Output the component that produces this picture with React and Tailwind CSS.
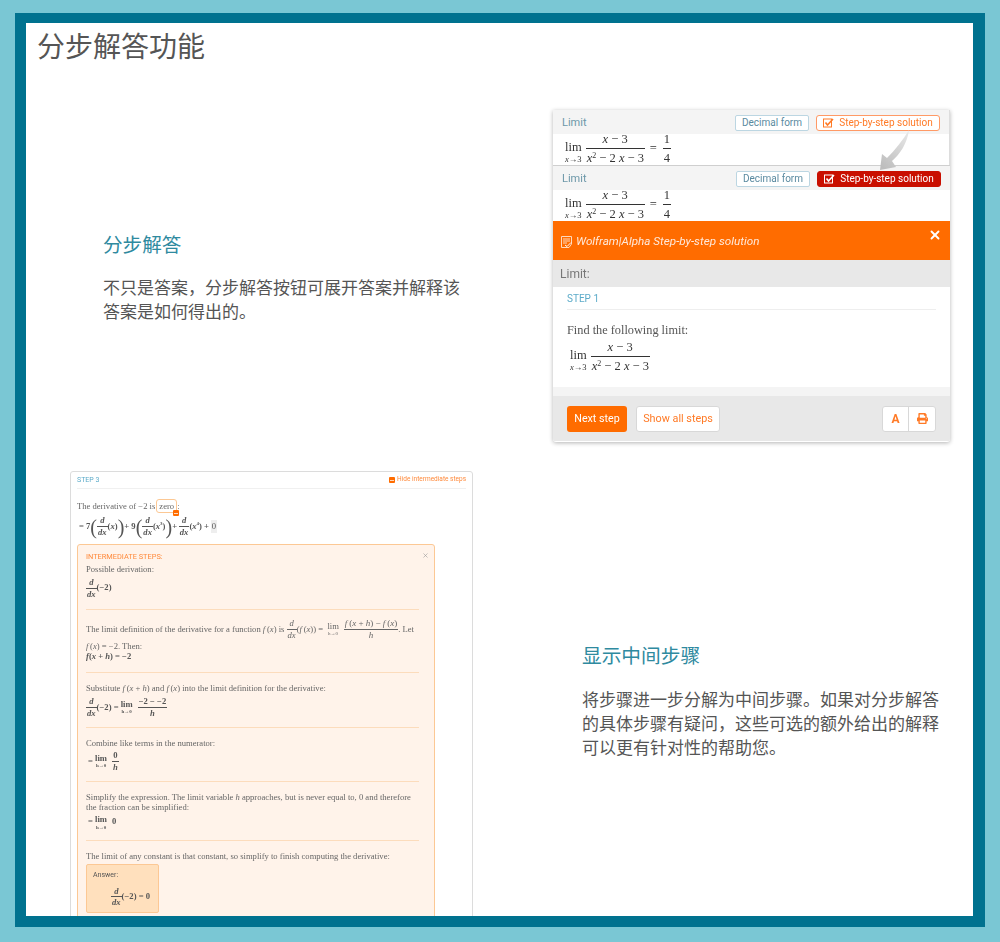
import React from "react";
import { X } from "lucide-react";
import { FaPrint } from "react-icons/fa";

const serif = "font-['Liberation_Serif',serif]";
const roboto = "font-['Roboto',sans-serif]";

const Frac = ({ top, bottom, size = "", pad = "pb-[1px]", padBottom = "pt-[1px]" }) => (
  <span className={`inline-flex flex-col items-center align-middle leading-none whitespace-nowrap ${size}`}>
    <span className={`px-[1px] ${pad}`}>{top}</span>
    <span className={`w-full border-t border-current text-center px-[1px] ${padBottom}`}>{bottom}</span>
  </span>
);

const Lim = ({ sub, subSize = "text-[8.5px]", gap = "mr-[5px]" }) => (
  <span className={`inline-flex flex-col items-center align-middle leading-none whitespace-nowrap ${gap}`}>
    <span>lim</span>
    <span className={`${subSize} mt-[1px]`}>{sub}</span>
  </span>
);

const V = ({ children }) => <i>{children}</i>;

const Denom = () => (
  <span>
    <V>x</V>
    <sup className="text-[8px] leading-none">2</sup> − 2 <V>x</V> − 3
  </span>
);

const LimitMath = ({ answer = true }) => (
  <div className={`${serif} text-[12.5px] text-[#333] flex items-center`}>
    <Lim gap="mr-[4px] mt-[7px]" sub={<span><V>x</V>→3</span>} />
    <Frac pad="pb-[2px]" padBottom="pt-[3px]" top={<span><V>x</V> − 3</span>} bottom={<Denom />} size="w-[59px]" />
    {answer && <span className="ml-[5px] mr-[6px]">=</span>}
    {answer && <Frac pad="pb-[2px]" padBottom="pt-[3px]" top="1" bottom="4" />}
  </div>
);

const ResultPanel = ({ active }) => (
  <div className={active ? "" : "border-r border-[#dddddd]"}>
    <div className="h-[24px] bg-[#f4f4f4] flex items-center pt-[2px] pl-[9px] pr-[9px]">
      <span className={`${roboto} text-[11px] text-[#6b97a8]`}>Limit</span>
      <button className={`${roboto} ml-auto w-[74px] h-[16px] bg-white border border-[#bcd6e2] rounded-[2px] text-[10px] text-[#5a8aa0] leading-none`}>
        Decimal form
      </button>
      <button
        className={`${roboto} ml-[7px] w-[124px] h-[16px] rounded-[3px] text-[10px] leading-none flex items-center justify-center gap-[5px] border ${
          active ? "bg-[#c90f00] border-[#c90f00] text-white" : "bg-white border-[#ff9a66] text-[#ff7a26]"
        }`}
      >
        <svg width="11" height="10" viewBox="0 0 11 10" fill="none" stroke="currentColor">
          <rect x="0.5" y="1" width="8" height="8" />
          <path d="M2.5 4.5 L4.5 7 L10 1" strokeWidth="1.6" />
        </svg>
        Step-by-step solution
      </button>
    </div>
    <div className="h-[31px] bg-white pl-[12px] pb-[2px] flex items-center">
      <LimitMath />
    </div>
  </div>
);

const WolframCard = () => (
  <div className="relative w-[397px] h-[332px] rounded-b-[3px] overflow-hidden shadow-[0_1px_4px_rgba(0,0,0,0.3)] blur-[0.4px]">
    <ResultPanel />
    <div className="h-[1px] bg-[#cfcfcf]" />
    <ResultPanel active />
    <svg className="absolute left-[320px] top-[18px]" width="45" height="50" viewBox="0 0 45 50">
      <defs>
        <linearGradient id="arrowFade" x1="0.8" y1="0" x2="0.2" y2="1">
          <stop offset="0" stopColor="#e6e6e6" />
          <stop offset="1" stopColor="#bdbdbd" />
        </linearGradient>
      </defs>
      <path fill="url(#arrowFade)" d="M36 2 C34 16 27 26 19 33 L23 39 L7 42 L9 26 L14 30 C22 22 30 12 36 2 Z" />
    </svg>
    <div className="h-[39px] bg-[#ff6c00] flex items-center pt-[3px] pl-[8px] pr-[9px] text-white relative">
      <svg width="11" height="12" viewBox="0 0 11 12" fill="none" stroke="#ffd9bd">
        <path d="M0.5 0.5 H10.5 V8 L8 11.5 H0.5 Z M2 3 H9 M2 5 H9 M2 7 H6" />
        <path d="M4 9 L6 10.5 L10 6.5" stroke="#fff" />
      </svg>
      <span className={`${roboto} ml-[4px] text-[11.7px] italic text-[#ffe9da]`}>Wolfram|Alpha Step-by-step solution</span>
      <X className="absolute right-[8px] top-[7px]" size={14} strokeWidth={3.2} />
    </div>
    <div className={`${roboto} h-[27px] bg-[#e8e8e8] flex items-center pl-[7px] text-[12px] text-[#777]`}>Limit:</div>
    <div className="h-[100px] bg-white px-[14px] pt-[6px]">
      <div className={`${roboto} text-[10px] text-[#5cabc9] h-[15px] border-b border-[#eeeeee] box-content pb-[1px] leading-[12px]`}>
        STEP 1
      </div>
      <div className={`${serif} text-[12.3px] text-[#555] mt-[13px] leading-[15px]`}>Find the following limit:</div>
      <div className="ml-[3px] mt-[3px]">
        <LimitMath answer={false} />
      </div>
    </div>
    <div className="h-[9px] bg-[#f4f4f4]" />
    <div className="h-[45px] bg-[#e8e8e8] flex items-center pl-[14px] pr-[14px]">
      <button className={`${roboto} w-[60px] h-[26px] pt-[2px] rounded-[3px] bg-[#ff6c00] text-white text-[10.7px]`}>Next step</button>
      <button className={`${roboto} ml-[9px] w-[84px] h-[26px] pt-[2px] rounded-[3px] bg-white border border-[#d8d8d8] text-[#ff7a26] text-[10.8px]`}>
        Show all steps
      </button>
      <div className="ml-auto flex h-[26px] rounded-[3px] bg-white border border-[#d8d8d8]">
        <span className={`${roboto} w-[26px] flex items-center justify-center text-[#ff7a26] text-[12px] font-bold border-r border-[#d8d8d8]`}>A</span>
        <span className="w-[26px] flex items-center justify-center text-[#ff7a26]">
          <FaPrint size={11} />
        </span>
      </div>
    </div>
  </div>
);

const Section = ({ h, children }) => (
  <div className={`${h} border-b border-[#fcdcbc] w-[333px] pt-[6px]`}>{children}</div>
);

const Bold = ({ children, className = "" }) => (
  <span className={`font-bold text-[#555] ${className}`}>{children}</span>
);

const D = ({ arg }) => (
  <Bold>
    <Frac top={<i>d</i>} bottom={<i>dx</i>} />
    {arg}
  </Bold>
);

const Minus = ({ className = "" }) => (
  <span className={`w-[6px] h-[6px] shrink-0 bg-[#ff6c00] rounded-[1px] flex items-center justify-center ${className}`}>
    <span className="w-[4px] h-[1px] bg-[#ffd9bd]" />
  </span>
);

const Paren = ({ children }) => <span className="text-[20px] font-light leading-none">{children}</span>;

const StepCard = () => (
  <div className={`w-[403px] h-[470px] border border-[#dcdcdc] rounded-[3px] bg-white px-[6px] ${serif} text-[8.6px] text-[#666] blur-[0.5px]`}>
    <div className="h-[17px] border-b border-[#f0f0f0] flex items-center justify-between mb-[9px]">
      <span className={`${roboto} text-[7px] text-[#5cabc9]`}>STEP 3</span>
      <span className={`${roboto} text-[6.5px] text-[#ff8a3c] flex items-center gap-[2px]`}>
        <Minus />
        Hide intermediate steps
      </span>
    </div>
    <div className="h-[16px] flex items-center">
      The derivative of −2 is
      <span className="relative ml-[1px] px-[2px] border border-[#fcc894] rounded-[3px]">
        zero
        <Minus className="absolute -right-[3px] -bottom-[4px]" />
      </span>
      :
    </div>
    <div className="h-[25px] flex items-center font-bold text-[#555] text-[8.6px] pl-[2px] whitespace-nowrap">
      = 7<Paren>(</Paren>
      <Frac top={<i>d</i>} bottom={<i>dx</i>} />(<i>x</i>)<Paren>)</Paren>+ 9
      <Paren>(</Paren>
      <Frac top={<i>d</i>} bottom={<i>dx</i>} />(<i>x</i><sup className="text-[5px]">3</sup>)
      <Paren>)</Paren>+&thinsp;
      <Frac top={<i>d</i>} bottom={<i>dx</i>} />(<i>x</i><sup className="text-[5px]">4</sup>) +&thinsp;
      <span className="bg-[#eeeeee] px-[1px] font-normal">0</span>
    </div>
    <div className="w-[358px] h-[400px] mt-[5px] bg-[#fff3ea] border border-[#fcc894] rounded-[3px] pl-[8px] relative overflow-hidden">
      <X className="absolute right-[5px] top-[7px] text-[#999]" size={7} strokeWidth={2} />
      <Section h="h-[65px]">
        <div className={`${roboto} text-[7.4px] text-[#ff8a3c] h-[12px] leading-[12px]`}>INTERMEDIATE STEPS:</div>
        <div className="h-[13px] leading-[13px]">Possible derivation:</div>
        <div className="mt-[2px]"><D arg="(−2)" /></div>
      </Section>
      <Section h="h-[63px]">
        <div className="h-[24px] flex items-center whitespace-nowrap pt-[2px]">
          The limit definition of the derivative for a function&nbsp;<i>f</i>&thinsp;(<i>x</i>)&nbsp;is&nbsp;
          <Frac top={<i>d</i>} bottom={<i>dx</i>} />
          (<i>f</i>&thinsp;(<i>x</i>)) =&nbsp;&nbsp;
          <Lim sub="h→0" subSize="text-[5px]" />
          <Frac size="text-[9px]" top={<span><i>f</i>&thinsp;(<i>x</i> + <i>h</i>) − <i>f</i>&thinsp;(<i>x</i>)</span>} bottom={<i>h</i>} />. Let
        </div>
        <div className="h-[12px] leading-[12px]"><i>f</i>&thinsp;(<i>x</i>) = −2. Then:</div>
        <Bold className="block h-[10px] leading-[10px] -mt-[1px]"><i>f</i>(<i>x</i> + <i>h</i>) = −2</Bold>
      </Section>
      <Section h="h-[55px]">
        <div className="h-[13px] mt-[3px] leading-[13px]">
          Substitute <i>f</i>&thinsp;(<i>x</i> + <i>h</i>) and <i>f</i>&thinsp;(<i>x</i>) into the limit definition for the derivative:
        </div>
        <Bold className="flex items-center mt-[2px]">
          <Frac top={<i>d</i>} bottom={<i>dx</i>} />(−2) =&nbsp;
          <Lim sub="h→0" subSize="text-[5px]" />
          <Frac top="−2 − −2" bottom={<i>h</i>} />
        </Bold>
      </Section>
      <Section h="h-[54px]">
        <div className="h-[13px] mt-[3px] leading-[13px]">Combine like terms in the numerator:</div>
        <Bold className="flex items-center mt-[1px] pl-[2px]">
          =&nbsp;
          <Lim sub="h→0" subSize="text-[5px]" />
          <Frac top="0" bottom={<i>h</i>} />
        </Bold>
      </Section>
      <Section h="h-[59px]">
        <div className="mt-[4px] leading-[10px]">
          Simplify the expression. The limit variable <i>h</i> approaches, but is never equal to, 0 and therefore the fraction can be simplified:
        </div>
        <Bold className="flex items-start mt-[3px] pl-[2px]">
          =&nbsp;
          <Lim sub="h→0" subSize="text-[5px]" />0
        </Bold>
      </Section>
      <div className="pt-[9px]">
        <div className="h-[13px] leading-[13px]">The limit of any constant is that constant, so simplify to finish computing the derivative:</div>
        <div className="w-[73px] h-[49px] mt-[1px] bg-[#ffe0bd] border border-[#fcc894] rounded-[2px] pl-[6px] pt-[5px]">
          <div className={`${roboto} text-[7px] text-[#555]`}>Answer:</div>
          <Bold className="flex items-center pl-[18px] mt-[6px]">
            <Frac top={<i>d</i>} bottom={<i>dx</i>} />(−2) = 0
          </Bold>
        </div>
      </div>
    </div>
  </div>
);

const cjk = "font-['Noto_Sans_CJK_SC','Noto_Sans_CJK_TC',sans-serif]";

export default function App() {
  return (
    <div className="w-[1000px] h-[942px] bg-[#7ac7d4] pt-[13px] pb-[15px] px-[15px] overflow-hidden">
      <div className="h-[914px] border-t-[10px] border-r-[12px] border-b-[11px] border-l-[11px] border-[#00728f] bg-white overflow-hidden">
        <h1 className={`${cjk} text-[28px] leading-[40px] text-[#555] pl-[11px] pt-[2px] font-normal`}>分步解答功能</h1>
        <div className="flex mt-[45px] h-[361px]">
          <div className={`${cjk} w-[527px] pl-[77px] pt-[120px]`}>
            <h2 className="text-[19.6px] leading-[28px] text-[#2f8a9f] font-normal">分步解答</h2>
            <p className="mt-[17px] w-[360px] text-[17px] leading-[24px] text-[#555]">
              {"不只是答案\uFF0C分步解答按钮可展开答案并解释该答案是如何得出的。"}
            </p>
          </div>
          <WolframCard />
        </div>
        <div className="flex">
          <div className="ml-[44px]">
            <StepCard />
          </div>
          <div className={`${cjk} ml-[109px] pt-[170px]`}>
            <h2 className="text-[19.7px] leading-[28px] text-[#2f8a9f] font-normal">显示中间步骤</h2>
            <p className="mt-[18px] w-[360px] text-[17px] leading-[24px] text-[#555]">
              {"将步骤进一步分解为中间步骤。如果对分步解答的具体步骤有疑问\uFF0C这些可选的额外给出的解释可以更有针对性的帮助您。"}
            </p>
          </div>
        </div>
      </div>
    </div>
  );
}
